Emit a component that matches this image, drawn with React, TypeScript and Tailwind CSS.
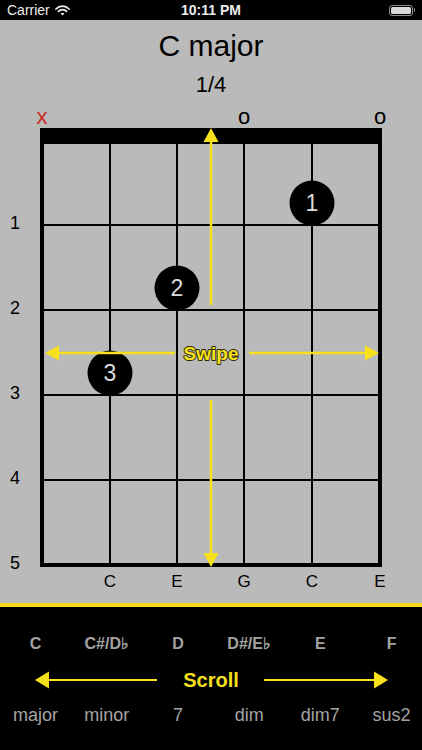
const YELLOW = '#f7e01c'

const roots = ['C', 'C#/D♭', 'D', 'D#/E♭', 'E', 'F']
const kinds = ['major', 'minor', '7', 'dim', 'dim7', 'sus2']

const strings = [42, 110, 177, 244, 312, 380]
const frets = [225, 310, 395, 480]
const bottomNotes = ['C', 'E', 'G', 'C', 'E']

const fingers = [
  { n: '1', x: 312, y: 203 },
  { n: '2', x: 177, y: 288 },
  { n: '3', x: 110, y: 373 },
]

function StatusBar() {
  return (
    <div className="relative flex h-5 items-center bg-black px-[7px] text-[#ececec]">
      <div className="flex items-center gap-[5px]">
        <span className="text-[14px] leading-none">Carrier</span>
        <svg width="15" height="11" viewBox="0 0 15 11">
          <path d="M1 4 A9 9 0 0 1 14 4" stroke="#ececec" strokeWidth="1.8" fill="none" strokeLinecap="round" />
          <path d="M3.4 6.4 A5.6 5.6 0 0 1 11.6 6.4" stroke="#ececec" strokeWidth="1.8" fill="none" strokeLinecap="round" />
          <path d="M5.6 8.6 L7.5 10.6 L9.4 8.6 A2.7 2.7 0 0 0 5.6 8.6 Z" fill="#ececec" />
        </svg>
      </div>
      <span className="absolute left-1/2 -translate-x-1/2 text-[14px] font-semibold leading-none">10:11 PM</span>
      <div className="ml-auto flex items-center">
        <div className="flex h-[11px] w-[24px] items-center rounded-[3px] border border-[#8a8a8a] p-[1px]">
          <div className="h-full w-full rounded-[1.5px] bg-[#d8d8d8]" />
        </div>
        <div className="ml-[1px] h-[4px] w-[1.5px] rounded-r-sm bg-[#8a8a8a]" />
      </div>
    </div>
  )
}

function Fretboard() {
  return (
    <svg width="422" height="503" viewBox="0 100 422 503" className="block">
      {/* open / muted markers */}
      <text x="42" y="124" fontSize="22" fill="#c62a1e" textAnchor="middle">x</text>
      <text x="244" y="124" fontSize="22" fill="#000" textAnchor="middle">o</text>
      <text x="380" y="124" fontSize="22" fill="#000" textAnchor="middle">o</text>

      {/* nut + frame */}
      <rect x="40" y="128" width="342" height="16" fill="#000" />
      <rect x="40" y="128" width="4" height="439" fill="#000" />
      <rect x="378" y="128" width="4" height="439" fill="#000" />
      <rect x="40" y="563" width="342" height="4" fill="#000" />

      {strings.slice(1, 5).map(x => (
        <line key={x} x1={x} y1="144" x2={x} y2="564" stroke="#000" strokeWidth="2" />
      ))}
      {frets.map(y => (
        <line key={y} x1="42" y1={y} x2="380" y2={y} stroke="#000" strokeWidth="2" />
      ))}

      {/* fret numbers */}
      {[1, 2, 3, 4, 5].map((n, i) => (
        <text key={n} x="15" y={229 + i * 85} fontSize="18" fill="#000" textAnchor="middle">{n}</text>
      ))}

      {/* string notes */}
      {bottomNotes.map((n, i) => (
        <text key={i} x={strings[i + 1]} y="587" fontSize="17" fill="#000" textAnchor="middle">{n}</text>
      ))}

      {/* finger dots */}
      {fingers.map(f => (
        <g key={f.n}>
          <circle cx={f.x} cy={f.y} r="22.5" fill="#000" />
          <text x={f.x} y={f.y + 8} fontSize="23" fill="#dcdcdc" textAnchor="middle">{f.n}</text>
        </g>
      ))}

      {/* swipe hint */}
      <line x1="211" y1="138" x2="211" y2="305" stroke={YELLOW} strokeWidth="2.5" />
      <polygon points="211,128 203.5,142 218.5,142" fill={YELLOW} />
      <line x1="211" y1="400" x2="211" y2="556" stroke={YELLOW} strokeWidth="2.5" />
      <polygon points="211,567 203.5,553 218.5,553" fill={YELLOW} />
      <line x1="55" y1="353" x2="175" y2="353" stroke={YELLOW} strokeWidth="2.5" />
      <polygon points="45,353 59,345.5 59,360.5" fill={YELLOW} />
      <line x1="249" y1="353" x2="368" y2="353" stroke={YELLOW} strokeWidth="2.5" />
      <polygon points="379,353 365,345.5 365,360.5" fill={YELLOW} />
      <text
        x="211"
        y="360"
        fontSize="19"
        fontWeight="700"
        fill={YELLOW}
        stroke="#2b2600"
        strokeWidth="1.8"
        strokeLinejoin="round"
        paintOrder="stroke"
        textAnchor="middle"
      >
        Swipe
      </text>
    </svg>
  )
}

export default function App() {
  return (
    <div className="flex h-[750px] w-[422px] flex-col overflow-hidden bg-black font-['Liberation_Sans',Arial,sans-serif]">
      <StatusBar />

      <div className="flex h-[583px] flex-col items-center bg-[#bababa] text-black">
        <h1 className="mt-2 text-[30px] leading-[36px]">C major</h1>
        <p className="mt-[7px] text-[22px] leading-[28px]">1/4</p>
        <div className="mt-[1px] self-stretch">
          <Fretboard />
        </div>
      </div>

      <div className="h-1 bg-[#f5dc1e]" />

      <div className="flex flex-1 flex-col bg-black pt-[27px]">
        <div className="flex overflow-hidden">
          {roots.map(r => (
            <div key={r} className="w-[71.2px] shrink-0 text-center text-[16px] font-bold leading-[20px] text-[#a4a4a4]">
              {r}
            </div>
          ))}
        </div>

        <svg width="422" height="20" viewBox="0 670 422 20" className="mt-4 block">
          <line x1="46" y1="680" x2="157" y2="680" stroke={YELLOW} strokeWidth="2" />
          <polygon points="35,680 49,671.5 49,688.5" fill={YELLOW} />
          <line x1="264" y1="680" x2="377" y2="680" stroke={YELLOW} strokeWidth="2" />
          <polygon points="388,680 374,671.5 374,688.5" fill={YELLOW} />
          <text x="211" y="687" fontSize="20" fontWeight="700" fill={YELLOW} textAnchor="middle">Scroll</text>
        </svg>

        <div className="mt-[14px] flex overflow-hidden">
          {kinds.map(k => (
            <div key={k} className="w-[71.2px] shrink-0 text-center text-[18px] leading-[22px] text-[#a4a4a4]">
              {k}
            </div>
          ))}
        </div>
      </div>
    </div>
  )
}
